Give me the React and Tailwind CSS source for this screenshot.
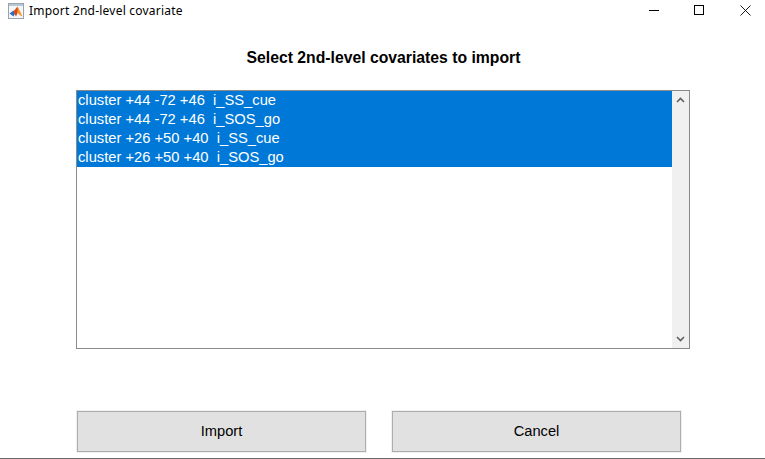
import React from "react";

const rows = [
  "cluster +44 -72 +46  i_SS_cue",
  "cluster +44 -72 +46  i_SOS_go",
  "cluster +26 +50 +40  i_SS_cue",
  "cluster +26 +50 +40  i_SOS_go",
];

function Logo() {
  return (
    <svg width="16" height="16" viewBox="0 0 16 16" className="block">
      <rect x="0.5" y="0.5" width="15" height="15" fill="#f4f6f8" stroke="#9aa3ad" />
      <rect x="1" y="1" width="14" height="2" fill="#b9c6d6" />
      <path d="M1.5 10.5 L5.5 7.5 L7.5 9.5 L5.5 13.5 Z" fill="#2a6fc9" />
      <path d="M5.5 8.5 L9.5 3.5 L11 7 L8 13.5 L6.5 11 Z" fill="#d8481a" />
      <path d="M9.5 3.5 L12 8 L14.5 13.5 L11.5 12 L9.5 9.5 Z" fill="#f59a2c" />
    </svg>
  );
}

function Btn({ children }) {
  return (
    <button className="w-[291px] h-[43px] border border-[#f0f0f0] p-0 bg-transparent">
      <span className="flex h-full items-center justify-center border border-[#adadad] bg-[#e1e1e1] text-[14.67px] text-black pb-[1px]">
        {children}
      </span>
    </button>
  );
}

export default function App() {
  return (
    <div className="w-[765px] h-[459px] bg-white flex flex-col overflow-hidden border-b border-[#6b6b6b] font-['Liberation_Sans',Arial,sans-serif]">
      <div className="h-[22px] flex items-center shrink-0">
        <div className="ml-[8px] mr-[5px]"><Logo /></div>
        <span className="text-[12px] text-black font-['Noto_Sans',sans-serif] leading-none tracking-[0.22px]">Import 2nd-level covariate</span>
        <div className="ml-auto flex items-center">
          <svg width="11" height="11" viewBox="0 0 11 11" className="mr-[34px] mt-[-2px]"><path d="M0 5.5H10" stroke="#000" /></svg>
          <svg width="11" height="11" viewBox="0 0 11 11" className="mr-[35px] mt-[-2px]"><rect x="0.5" y="0.5" width="9" height="9" fill="none" stroke="#000" /></svg>
          <svg width="11" height="11" viewBox="0 0 11 11" className="mr-[14px] mt-[-2px]"><path d="M0.5 0.5L10.5 10.5M10.5 0.5L0.5 10.5" stroke="#000" strokeWidth="0.9" /></svg>
        </div>
      </div>

      <h1 className="mt-[27px] h-[18px] text-center text-[15.75px] leading-[18px] font-bold text-black ml-[2px]">Select 2nd-level covariates to import</h1>

      <div className="mt-[23px] ml-[76px] w-[614px] h-[259px] border border-[#8a8a8a] flex shrink-0">
        <div className="flex-1 flex flex-col">
          {rows.map((r) => (
            <div key={r} className="h-[19px] bg-[#0078d7] text-white text-[14.72px] leading-[18px] pl-[1px] whitespace-pre">{r}</div>
          ))}
        </div>
        <div className="w-[17px] bg-[#f0f0f0] flex flex-col justify-between items-center pt-[6px] pb-[6px]">
          <svg width="9" height="6" viewBox="0 0 9 6"><path d="M1 5L4.5 1.5L8 5" fill="none" stroke="#606060" strokeWidth="1.6" /></svg>
          <svg width="9" height="6" viewBox="0 0 9 6"><path d="M1 1L4.5 4.5L8 1" fill="none" stroke="#606060" strokeWidth="1.6" /></svg>
        </div>
      </div>

      <div className="mt-[61px] ml-[76px] flex gap-[24px]">
        <Btn>Import</Btn>
        <Btn>Cancel</Btn>
      </div>
    </div>
  );
}
